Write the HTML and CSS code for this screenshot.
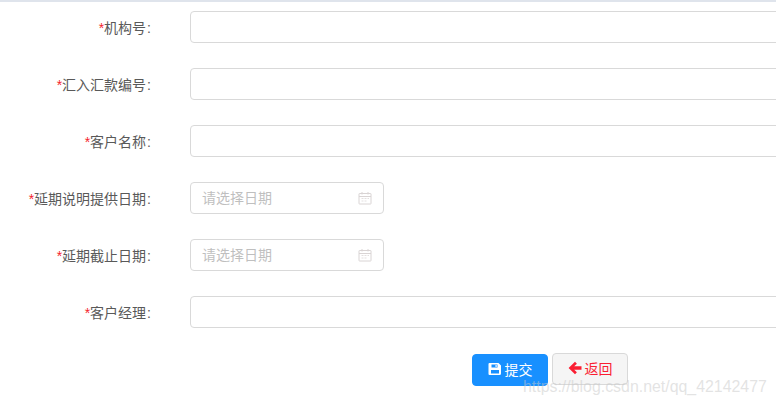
FILE: index.html
```html
<!DOCTYPE html>
<html lang="zh-CN">
<head>
    <meta charset="UTF-8">
    <meta name="viewport" content="width=device-width, initial-scale=1.0">
    <title>延期说明</title>
    <link rel="stylesheet" href="styles.css">
</head>
<body>
    <form class="form">
        <div class="form-row">
            <label class="form-label"><span class="required">*</span>机构号<span class="colon">:</span></label>
            <input class="text-input" type="text">
        </div>
        <div class="form-row">
            <label class="form-label"><span class="required">*</span>汇入汇款编号<span class="colon">:</span></label>
            <input class="text-input" type="text">
        </div>
        <div class="form-row">
            <label class="form-label"><span class="required">*</span>客户名称<span class="colon">:</span></label>
            <input class="text-input" type="text">
        </div>
        <div class="form-row">
            <label class="form-label"><span class="required">*</span>延期说明提供日期<span class="colon">:</span></label>
            <div class="date-input">
                <span class="placeholder">请选择日期</span>
                <svg class="calendar-icon" viewBox="0 0 14 14" width="14" height="14">
                    <path d="M1.5 2.5h11a.5.5 0 0 1 .5.5v9.500a.5.5 0 0 1-.5.5h-11a.5.5 0 0 1-.5-.5V3a.5.5 0 0 1 .5-.5z" fill="none" stroke="#d9d4d4"/>
                    <path d="M1 5.500h12M4 1v2.500M10 1v2.500" fill="none" stroke="#d9d4d4"/>
                    <path d="M3.500 7.500h2M6.500 7.500h2M9.500 7.500h1.500M3.500 10h2M6.500 10h2" fill="none" stroke="#e2dfdf"/>
                </svg>
            </div>
        </div>
        <div class="form-row">
            <label class="form-label"><span class="required">*</span>延期截止日期<span class="colon">:</span></label>
            <div class="date-input">
                <span class="placeholder">请选择日期</span>
                <svg class="calendar-icon" viewBox="0 0 14 14" width="14" height="14">
                    <path d="M1.5 2.5h11a.5.5 0 0 1 .5.5v9.500a.5.5 0 0 1-.5.5h-11a.5.5 0 0 1-.5-.5V3a.5.5 0 0 1 .5-.5z" fill="none" stroke="#d9d4d4"/>
                    <path d="M1 5.500h12M4 1v2.500M10 1v2.500" fill="none" stroke="#d9d4d4"/>
                    <path d="M3.500 7.500h2M6.500 7.500h2M9.500 7.500h1.500M3.500 10h2M6.500 10h2" fill="none" stroke="#e2dfdf"/>
                </svg>
            </div>
        </div>
        <div class="form-row">
            <label class="form-label"><span class="required">*</span>客户经理<span class="colon">:</span></label>
            <input class="text-input" type="text">
        </div>
        <div class="form-actions">
            <button class="btn btn-primary" type="button">
                <svg viewBox="0 0 14 14" width="14" height="14">
                    <path d="M1.500 1h9L13 3.500v8a1.500 1.500 0 0 1-1.500 1.500h-10A1 1 0 0 1 .5 12V2a1 1 0 0 1 1-1z" fill="#fff"/>
                    <path d="M3.500 2.500h6v3h-6zM3 8h8v3.500H3z" fill="#1890ff"/>
                    <path d="M7.500 3h1.200v2H7.500z" fill="#fff"/>
                </svg>
                提交
            </button>
            <button class="btn btn-back" type="button">
                <svg viewBox="0 0 14 14" width="14" height="14">
                    <path d="M7 .8.6 7 7 13.200l1.900-1.900L6.200 8.700H13.500V5.300H6.200l2.700-2.600z" fill="#fa1e32"/>
                </svg>
                返回
            </button>
        </div>
    </form>
    <div class="watermark">https://blog.csdn.net/qq_42142477</div>
</body>
</html>
```

FILE: styles.css
```css
/* 页面基本样式 */
html, body {
    height: 100%;
}

body {
    margin: 0;
    overflow: hidden;
    position: relative;
    background-color: #fff;
    color: #595959;
    font-family: "Liberation Sans", "Noto Sans CJK SC", sans-serif;
    font-size: 14px;
}

/* 表单 */
.form {
    overflow: hidden;
    border-top: 2px solid #dfe4ec;
    padding-top: 9px;
}

.form-row {
    display: flex;
    align-items: center;
    height: 32px;
    margin-bottom: 25px;
}

.form-label {
    flex: none;
    width: 151px;
    margin-right: 39px;
    text-align: right;
}

.required {
    color: #f5222d;
}

.colon {
    margin-left: 1px;
}

.text-input {
    flex: none;
    box-sizing: border-box;
    width: 640px;
    height: 32px;
    padding: 0 11px;
    background-color: #fff;
    border: 1px solid #d9d9d9;
    border-radius: 4px;
}

/* 日期选择 */
.date-input {
    flex: none;
    box-sizing: border-box;
    display: flex;
    align-items: center;
    justify-content: space-between;
    width: 194px;
    height: 32px;
    padding: 0 11px;
    border: 1px solid #d9d9d9;
    border-radius: 4px;
}

.placeholder {
    margin-bottom: 2px;
    color: #bfbfbf;
}

.calendar-icon {
    display: block;
}

/* 按钮 */
.form-actions {
    display: flex;
    align-items: flex-start;
    gap: 4px;
    padding-left: 472px;
    padding-bottom: 2px;
}

.btn {
    box-sizing: border-box;
    display: flex;
    align-items: center;
    justify-content: center;
    gap: 3px;
    width: 76px;
    height: 32px;
    padding: 0 0 2px;
    border-radius: 4px;
    font-family: inherit;
    font-size: 14px;
}

.btn-primary {
    margin-top: 1px;
    background-color: #1890ff;
    border: 1px solid #1890ff;
    color: #fff;
}

.btn-back {
    background-color: #f5f5f5;
    border: 1px solid #d9d9d9;
    color: #fa1e32;
}

/* 水印 */
.watermark {
    position: absolute;
    left: 523px;
    top: 378px;
    color: rgba(200, 200, 200, 0.5);
    font-size: 15.900px;
    white-space: nowrap;
}
```
